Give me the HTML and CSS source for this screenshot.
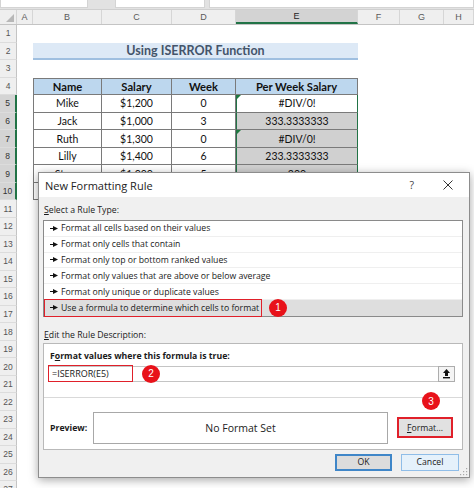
FILE: index.html
```html
<!DOCTYPE html>
<html>
<head>
<meta charset="utf-8">
<link rel="stylesheet" href="styles.css">
</head>
<body>
<div class="fbar"><div class="fb fb1"></div><div class="fb fb2"></div><div class="fb fb3"></div></div>
<div class="sheet">
  <div class="hdr">
    <div class="w0 corner"><svg width="8" height="8" viewBox="0 0 8 8"><path d="M8 0 L8 8 L0 8 Z" fill="#b8b8b8"/></svg></div>
    <div class="wa">A</div><div class="wb">B</div><div class="wc">C</div><div class="wd">D</div>
    <div class="we hsel">E</div><div class="wf">F</div><div class="wg">G</div><div class="wh">H</div>
  </div>
  <div class="row"><div class="rh">1</div></div>
  <div class="row"><div class="rh">2</div><div class="wa"></div><div class="title">Using ISERROR Function</div></div>
  <div class="row"><div class="rh">3</div></div>
  <div class="row"><div class="rh">4</div><div class="wa"></div>
    <div class="wb td th first">Name</div><div class="wc td th">Salary</div><div class="wd td th">Week</div><div class="we td th">Per Week Salary</div></div>
  <div class="row"><div class="rh on">5</div><div class="wa"></div>
    <div class="wb td first">Mike</div><div class="wc td">$1,200</div><div class="wd td">0</div><div class="we td sel err">#DIV/0!</div></div>
  <div class="row"><div class="rh on">6</div><div class="wa"></div>
    <div class="wb td first">Jack</div><div class="wc td">$1,000</div><div class="wd td">3</div><div class="we td sel gr">333.3333333</div></div>
  <div class="row"><div class="rh on">7</div><div class="wa"></div>
    <div class="wb td first">Ruth</div><div class="wc td">$1,300</div><div class="wd td">0</div><div class="we td sel gr err">#DIV/0!</div></div>
  <div class="row"><div class="rh on">8</div><div class="wa"></div>
    <div class="wb td first">Lilly</div><div class="wc td">$1,400</div><div class="wd td">6</div><div class="we td sel gr">233.3333333</div></div>
  <div class="row"><div class="rh on">9</div><div class="wa"></div>
    <div class="wb td first">Steve</div><div class="wc td">$1,000</div><div class="wd td">5</div><div class="we td sel gr">200</div></div>
  <div class="row"><div class="rh on">10</div><div class="wa"></div>
    <div class="wb td first"></div><div class="wc td"></div><div class="wd td"></div><div class="we td sel gr"></div></div>
  <div class="row"><div class="rh">11</div></div>
  <div class="row"><div class="rh">12</div></div>
  <div class="row"><div class="rh">13</div></div>
  <div class="row"><div class="rh">14</div></div>
  <div class="row"><div class="rh">15</div></div>
  <div class="row"><div class="rh">16</div></div>
  <div class="row"><div class="rh">17</div></div>
  <div class="row"><div class="rh">18</div></div>
  <div class="row"><div class="rh">19</div></div>
  <div class="row"><div class="rh">20</div></div>
  <div class="row"><div class="rh">21</div></div>
  <div class="row"><div class="rh">22</div></div>
  <div class="row"><div class="rh">23</div></div>
  <div class="row"><div class="rh">24</div></div>
  <div class="row"><div class="rh">25</div></div>
  <div class="row"><div class="rh">26</div></div>
  <div class="row"><div class="rh">27</div></div>
</div>

<div class="dlg">
  <div class="dtitle">
    <span class="dname">New Formatting Rule</span>
    <span class="qm">?</span>
    <svg class="xic" width="10" height="10" viewBox="0 0 10 10"><path d="M0.5 0.5 L9.5 9.5 M9.5 0.5 L0.5 9.5" stroke="#333" stroke-width="1"/></svg>
  </div>
  <div class="dbody">
    <div class="lbl lbl1"><u>S</u>elect a Rule Type:</div>
    <div class="list">
      <div class="item"><svg class="arr" width="8" height="5" viewBox="0 0 8 5"><path d="M0 2.5 H4" stroke="#111" stroke-width="1"/><path d="M3 0 L8 2.5 L3 5 Z" fill="#111"/></svg>Format all cells based on their values</div>
      <div class="item"><svg class="arr" width="8" height="5" viewBox="0 0 8 5"><path d="M0 2.5 H4" stroke="#111" stroke-width="1"/><path d="M3 0 L8 2.5 L3 5 Z" fill="#111"/></svg>Format only cells that contain</div>
      <div class="item"><svg class="arr" width="8" height="5" viewBox="0 0 8 5"><path d="M0 2.5 H4" stroke="#111" stroke-width="1"/><path d="M3 0 L8 2.5 L3 5 Z" fill="#111"/></svg>Format only top or bottom ranked values</div>
      <div class="item"><svg class="arr" width="8" height="5" viewBox="0 0 8 5"><path d="M0 2.5 H4" stroke="#111" stroke-width="1"/><path d="M3 0 L8 2.5 L3 5 Z" fill="#111"/></svg>Format only values that are above or below average</div>
      <div class="item"><svg class="arr" width="8" height="5" viewBox="0 0 8 5"><path d="M0 2.5 H4" stroke="#111" stroke-width="1"/><path d="M3 0 L8 2.5 L3 5 Z" fill="#111"/></svg>Format only unique or duplicate values</div>
      <div class="item isel"><span class="hl hl1"><svg class="arr" width="8" height="5" viewBox="0 0 8 5"><path d="M0 2.5 H4" stroke="#111" stroke-width="1"/><path d="M3 0 L8 2.5 L3 5 Z" fill="#111"/></svg>Use a formula to determine which cells to format</span><span class="badge b1">1</span></div>
    </div>
    <div class="lbl lbl2"><u>E</u>dit the Rule Description:</div>
    <div class="desc">
      <div class="dtop">
        <div class="blbl">F<u>o</u>rmat values where this formula is true:</div>
        <div class="inp">
          <span class="hl hl2">=ISERROR(E5)</span><span class="badge b2">2</span>
          <span class="upl"><svg width="11" height="11" viewBox="0 0 11 11"><path d="M5.5 1 L9 5 L7 5 L7 8 L4 8 L4 5 L2 5 Z" fill="#111"/><rect x="2" y="9" width="7" height="1.4" fill="#111"/></svg></span>
        </div>
      </div>
      <div class="dbot">
        <div class="plbl">Preview:</div>
        <div class="pbox">No Format Set</div>
        <div class="fbtn"><u>F</u>ormat...<span class="badge b3">3</span></div>
      </div>
    </div>
    <div class="btns">
      <div class="btn ok">OK</div>
      <div class="btn cancel">Cancel</div>
    </div>
  </div>
  <svg class="grip" width="8" height="8" viewBox="0 0 8 8"><g fill="#a8a8a8"><rect x="6" y="0" width="1.2" height="1.2"/><rect x="3" y="3" width="1.2" height="1.2"/><rect x="6" y="3" width="1.2" height="1.2"/><rect x="0" y="6" width="1.2" height="1.2"/><rect x="3" y="6" width="1.2" height="1.2"/><rect x="6" y="6" width="1.2" height="1.2"/></g></svg>
</div>
</body>
</html>
```

FILE: styles.css
```css
* { box-sizing: border-box; margin: 0; padding: 0; }
html, body { width: 474px; height: 488px; overflow: hidden; }
body { background: #fff; font-family: Lato, "Liberation Sans", sans-serif; position: relative; }

.fbar { height: 10px; background: #e2e2e2; display: flex; border-bottom: 1px solid #cfcfcf; }
.fb { background: #fff; height: 8px; border: 1px solid #d4d4d4; border-top: none; }
.fb1 { width: 88px; }
.fb2 { width: 90px; margin-left: 27px; }
.fb3 { flex: 1; margin-left: 4px; }

.w0 { width: 17px; flex: none; }
.wa { width: 16px; flex: none; }
.wb { width: 69px; flex: none; }
.wc { width: 70px; flex: none; }
.wd { width: 64px; flex: none; }
.we { width: 122px; flex: none; }
.wf { width: 42px; flex: none; }
.wg { width: 44px; flex: none; }
.wh { flex: 1; }

.hdr { display: flex; height: 15px; background: #efefef; border-bottom: 1px solid #c4c4c4; font-size: 9px; color: #5a5a5a; font-family: "Liberation Sans", sans-serif; }
.hdr > div { display: flex; align-items: center; justify-content: center; border-right: 1px solid #d6d6d6; }
.corner { justify-content: flex-end !important; align-items: flex-end !important; padding: 0 2px 2px 0; }
.hsel { background: #d3d3d3; border-bottom: 2px solid #217346; color: #222; }

.row { display: flex; height: 17.55px; }
.rh { width: 17px; flex: none; background: #efefef; border-right: 1px solid #c4c4c4; border-bottom: 1px solid #dcdcdc;
      font-size: 8.5px; color: #555; display: flex; align-items: center; justify-content: center; font-family: "Liberation Sans", sans-serif; }
.rh.on { background: #d4d4d4; border-right: 2px solid #217346; color: #333; }

.title { width: 325px; background: #dde9f6; border-bottom: 2px solid #9fbfe0; color: #44546a; font-weight: 700; font-size: 12.5px;
         display: flex; align-items: center; justify-content: center; }

.td { display: flex; align-items: center; justify-content: center; border-right: 1px solid #7a7a7a; border-bottom: 1px solid #7a7a7a;
      font-size: 10.5px; color: #111; position: relative; }
.first { border-left: 1px solid #7a7a7a; }
.th { background: #bdd7ee; font-weight: 700; font-size: 11.2px; border-top: 1px solid #7a7a7a; }
.sel { border-left: 1px solid #217346; border-right: 1px solid #217346; }
.gr { background: #d0d0d0; }
.err::before { content: ""; position: absolute; left: 0; top: 0; border-top: 4px solid #1f7a3f; border-right: 4px solid transparent; }

.dlg { position: absolute; left: 38px; top: 172px; width: 432px; height: 306px; background: #f0f0f0; border: 1px solid #8d8d8d;
       box-shadow: 0 2px 9px rgba(0,0,0,0.35); display: flex; flex-direction: column; font-family: "Open Sans", sans-serif;
       font-size: 8.7px; color: #1a1a1a; }
.dtitle { height: 24px; background: #fff; display: flex; align-items: center; padding-left: 6px; flex: none; }
.dname { font-size: 11px; flex: 1; color: #222; }
.qm { font-size: 10.5px; color: #444; margin-right: 29px; }
.xic { margin-right: 16px; }

.dbody { padding: 0 6px 0 4px; display: flex; flex-direction: column; flex: 1; }
.lbl { line-height: 14px; height: 14px; padding-left: 1px; }
.lbl1 { margin-top: 6px; }
.lbl2 { margin-top: 11px; }
.list { margin-top: 3px; border: 1px solid #8a8a8a; background: #fff; }
.item { height: 15.8px; display: flex; align-items: center; padding-left: 6px; border-bottom: 1px solid #efefef; white-space: nowrap; }
.item:last-child { border-bottom: none; }
.arr { margin-right: 3px; flex: none; }
.isel { background: #dedede; padding-left: 0; }
.hl { border: 1.5px solid #e0202a; display: inline-flex; align-items: center; }
.hl1 { height: 18px; padding: 0 2px 0 5px; }
.badge { width: 18px; height: 18px; border-radius: 50%; background: #e8121a; color: #fff; font-size: 10px; flex: none;
         display: inline-flex; align-items: center; justify-content: center; font-family: "Liberation Sans", sans-serif; }
.b1 { margin-left: 7px; }

.desc { margin-top: 1px; border: 1px solid #b9b9b9; background: #fff; }
.dtop { height: 54px; padding: 6px 7px 0 4px; border-bottom: 1px solid #d9d9d9; }
.blbl { font-weight: 700; line-height: 13px; height: 13px; padding-left: 2px; }
.inp { margin-top: 3px; height: 16px; border: 1px solid #c4c4c4; display: flex; align-items: center; }
.hl2 { height: 17px; margin: 0 0 0 -1px; width: 85px; padding-left: 3px; font-size: 9px; }
.b2 { margin-left: 9px; }
.upl { margin-left: auto; width: 17px; height: 16px; border: 1px solid #adadad; background: #f4f4f4; margin-right: -1px;
       display: flex; align-items: center; justify-content: center; }

.dbot { height: 51px; display: flex; align-items: center; padding: 9px 9px 0 6px; }
.plbl { font-weight: 700; width: 43px; flex: none; }
.pbox { width: 295px; height: 32px; border: 1px solid #a8a8a8; display: flex; align-items: center; justify-content: center; font-size: 10.5px; color: #222; flex: none; }
.fbtn { margin-left: 9px; width: 56px; height: 21px; background: #e1e1e1; border: 2px solid #e0202a; display: flex; align-items: center;
        justify-content: center; position: relative; font-size: 8.7px; }
.b3 { position: absolute; left: 23px; top: -27px; }

.btns { margin-top: 4px; display: flex; justify-content: flex-end; gap: 9px; padding-right: 4px; }
.btn { height: 17px; display: flex; align-items: center; justify-content: center; }
.ok { width: 57px; background: #dcdcdc; border: 2px solid #3f86c8; }
.cancel { width: 58px; background: #e5f1fb; border: 1px solid #8fbde8; }
.grip { position: absolute; right: 1px; bottom: 1px; }
```
